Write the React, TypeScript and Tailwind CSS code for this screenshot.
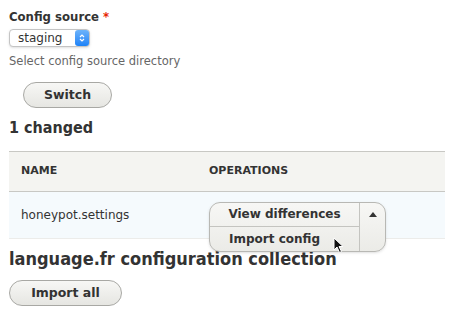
import React from "react";

const font = { fontFamily: '"DejaVu Sans", "Liberation Sans", sans-serif' };
const bold = { fontFamily: '"DejaVu Sans Condensed", "DejaVu Sans", sans-serif' };

const Pill = ({ label, className = "" }: { label: string; className?: string }) => (
  <button
    className={`h-[26px] rounded-full border border-[#a8a8a4] bg-gradient-to-b from-[#f7f7f5] to-[#e6e6e2] text-[12.5px] font-bold text-[#333] ${className}`}
  >
    {label}
  </button>
);

export default function App() {
  return (
    <div className="w-[452px] h-[323px] overflow-hidden bg-white text-[#333] px-[9px] pt-[8px]" style={font}>
      {/* Config source select */}
      <div className="text-[13px] font-bold leading-[18px]" style={bold}>
        Config source <span className="text-[#e62600]">*</span>
      </div>
      <div className="mt-[3px] flex h-[18px] w-[81px] items-center rounded-[4px] border border-[#c4c4c4] bg-white shadow-sm">
        <span className="flex-1 pl-[8px] text-[12px] leading-none">staging</span>
        <span className="flex h-[16px] w-[14px] items-center justify-center rounded-[3px] bg-gradient-to-b from-[#6cb3fa] to-[#1a82f7]">
          <svg width="6" height="10" viewBox="0 0 6 10">
            <path d="M1 4 L3 2 L5 4 M1 6 L3 8 L5 6" stroke="white" strokeWidth="1.2" fill="none" />
          </svg>
        </span>
      </div>
      <div className="mt-[6px] text-[11.5px] leading-[16px] text-[#666]">Select config source directory</div>
      <Pill label="Switch" className="mt-[13px] ml-[14px] w-[89px]" />

      {/* Changed list */}
      <h2 className="mt-[9px] text-[16px] font-bold leading-[22px]" style={bold}>1 changed</h2>
      <div className="relative mt-[12px] mr-[-2px]">
        <div className="flex h-[41px] items-center border-y border-[#c8c8c4] bg-[#f4f4f1] text-[11px] font-bold uppercase">
          <div className="w-[200px] pl-[12px]">Name</div>
          <div>Operations</div>
        </div>
        <div className="flex h-[47px] items-center border-b border-[#ececea] bg-[#f5fafd]">
          <div className="w-[200px] pl-[12px] text-[12px]">honeypot.settings</div>
        </div>
        {/* Dropbutton, open */}
        <div className="absolute left-[200px] top-[51px] z-10 flex h-[50px] w-[177px] rounded-[11px] border border-[#b8b8b4] bg-gradient-to-b from-[#f7f7f5] to-[#ebebe7] text-[12px] font-bold shadow-sm">
          <div className="flex w-[150px] flex-col border-r border-[#c4c4c0]">
            <div className="flex h-[24px] items-center justify-center border-b border-[#c4c4c0]">View differences</div>
            <div className="flex h-[25px] items-center pl-[19px]">Import config</div>
          </div>
          <div className="flex flex-1 items-start justify-center pt-[9px]">
            <svg width="8" height="5" viewBox="0 0 8 5">
              <path d="M0 5 L4 0 L8 5 Z" fill="#333" />
            </svg>
          </div>
          {/* mouse pointer */}
          <svg className="absolute left-[123px] top-[34px]" width="12" height="17" viewBox="0 0 12 17">
            <path d="M1 1 L1 13 L4 10 L6.5 15.5 L8.5 14.5 L6 9.5 L10 9.5 Z" fill="#111" stroke="white" strokeWidth="1" />
          </svg>
        </div>
      </div>

      <h2 className="mt-[9px] text-[18px] font-bold leading-[22px]" style={bold}>
        language.fr configuration collection
      </h2>
      <Pill label="Import all" className="mt-[10px] w-[113px]" />
    </div>
  );
}
